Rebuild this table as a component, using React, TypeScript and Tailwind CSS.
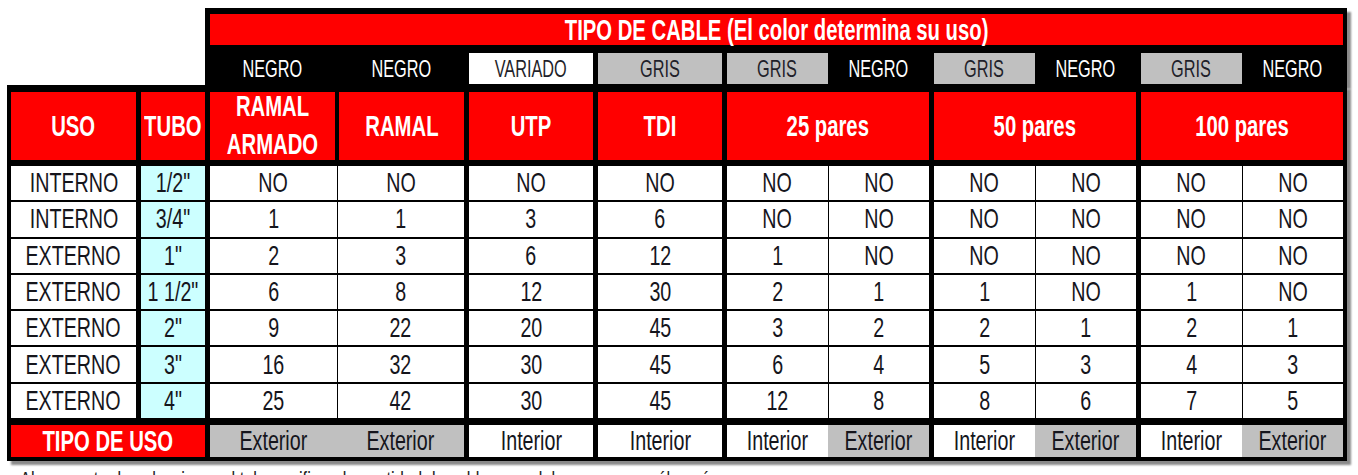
import React from 'react';

const cols = 'grid grid-cols-[125px_64px_254px_124px_124px_202px_202px_202px] gap-x-[5px]';
const topCols = 'grid grid-cols-[254px_124px_124px_202px_202px_202px] gap-x-[5px]';

const rows = [
  ['INTERNO', '1/2"', 'NO', 'NO', 'NO', 'NO', 'NO', 'NO', 'NO', 'NO', 'NO', 'NO'],
  ['INTERNO', '3/4"', '1', '1', '3', '6', 'NO', 'NO', 'NO', 'NO', 'NO', 'NO'],
  ['EXTERNO', '1"', '2', '3', '6', '12', '1', 'NO', 'NO', 'NO', 'NO', 'NO'],
  ['EXTERNO', '1 1/2"', '6', '8', '12', '30', '2', '1', '1', 'NO', '1', 'NO'],
  ['EXTERNO', '2"', '9', '22', '20', '45', '3', '2', '2', '1', '2', '1'],
  ['EXTERNO', '3"', '16', '32', '30', '45', '6', '4', '5', '3', '4', '3'],
  ['EXTERNO', '4"', '25', '42', '30', '45', '12', '8', '8', '6', '7', '5'],
];

const font = { fontFamily: "'Liberation Sans', Arial, sans-serif" };

// narrow look: Liberation Sans squeezed sideways
function N({ children }: { children: React.ReactNode }) {
  return <span className="inline-block whitespace-nowrap scale-x-[0.82] scale-y-[1.14]">{children}</span>;
}

function B({ children, className = '' }: { children: React.ReactNode; className?: string }) {
  return (
    <span className={`inline-block whitespace-nowrap text-center font-bold scale-x-[0.78] scale-y-[1.12] ${className}`}>
      {children}
    </span>
  );
}

function C({ children }: { children: React.ReactNode }) {
  return <span className="inline-block whitespace-nowrap scale-x-[0.74] scale-y-[1.08]">{children}</span>;
}

function Cell({ children, className = '' }: { children?: React.ReactNode; className?: string }) {
  return (
    <div className={`flex items-center justify-center text-[24px] leading-none text-[#15151c] ${className}`}>
      <N>{children}</N>
    </div>
  );
}

function Head({ children }: { children: React.ReactNode }) {
  return (
    <div className="flex items-center justify-center bg-[#ff0000] text-[26px] leading-none text-white">
      <B>{children}</B>
    </div>
  );
}

function Pair({ a, b }: { a: string; b: string }) {
  return (
    <div className="flex gap-[1px]">
      <div className="flex flex-1 items-center justify-center bg-[#c0c0c0] text-[#1f1f2a]">
        <C>{a}</C>
      </div>
      <div className="flex flex-1 items-center justify-center text-white">
        <C>{b}</C>
      </div>
    </div>
  );
}

export default function App() {
  return (
    <div className="h-screen overflow-hidden bg-white pl-[7px] pt-[8px]" style={font}>
      {/* Tipo de cable */}
      <div className="ml-[198px] w-[1142px] bg-black pb-[1px] pl-[5px] pr-[4px] pt-[6px] shadow-[4px_4px_2px_#8a8a8a]">
        <div className="flex h-[31px] items-center justify-center bg-[#ff0000] text-[26px] leading-none text-white">
          <B>TIPO DE CABLE (El color determina su uso)</B>
        </div>
        <div className={`${topCols} mt-[8px] h-[31px] text-[22px] leading-none`}>
          <div className="flex gap-[4px] text-white">
            <div className="flex flex-1 items-center justify-center">
              <C>NEGRO</C>
            </div>
            <div className="flex flex-1 items-center justify-center">
              <C>NEGRO</C>
            </div>
          </div>
          <div className="flex items-center justify-center bg-white text-[#1f1f2a]">
            <C>VARIADO</C>
          </div>
          <div className="flex items-center justify-center bg-[#c0c0c0] text-[#1f1f2a]">
            <C>GRIS</C>
          </div>
          <Pair a="GRIS" b="NEGRO" />
          <Pair a="GRIS" b="NEGRO" />
          <Pair a="GRIS" b="NEGRO" />
        </div>
      </div>

      {/* Main table */}
      <div className="w-[1340px] bg-black pb-[4px] pl-[4px] pr-[4px] pt-[7px] shadow-[4px_4px_2px_#8a8a8a]">
        <div className={`${cols} h-[67px]`}>
          <Head>USO</Head>
          <Head>TUBO</Head>
          <div className="flex gap-[4px]">
            <div className="flex flex-1 items-center justify-center bg-[#ff0000] text-[26px] leading-[34px] text-white">
              <B className="translate-y-[-1px]">
                RAMAL
                <br />
                ARMADO
              </B>
            </div>
            <div className="flex flex-1 items-center justify-center bg-[#ff0000] text-[26px] leading-none text-white">
              <B>RAMAL</B>
            </div>
          </div>
          <Head>UTP</Head>
          <Head>TDI</Head>
          <Head>25 pares</Head>
          <Head>50 pares</Head>
          <Head>100 pares</Head>
        </div>

        <div className="mt-[7px] flex flex-col gap-y-[2px]">
          {rows.map((r, i) => (
            <div key={i} className={`${cols} h-[34.3px]`}>
              <Cell className="bg-white">{r[0]}</Cell>
              <Cell className="bg-[#ccffff]">{r[1]}</Cell>
              <div className="flex gap-[1px]">
                <Cell className="flex-1 bg-white">{r[2]}</Cell>
                <Cell className="flex-1 bg-white">{r[3]}</Cell>
              </div>
              <Cell className="bg-white">{r[4]}</Cell>
              <Cell className="bg-white">{r[5]}</Cell>
              {[6, 8, 10].map((k) => (
                <div key={k} className="flex gap-[1px]">
                  <Cell className="flex-1 bg-white">{r[k]}</Cell>
                  <Cell className="flex-1 bg-white">{r[k + 1]}</Cell>
                </div>
              ))}
            </div>
          ))}
        </div>

        <div className={`${cols} mt-[7px] h-[32px]`}>
          <div className="col-span-2 flex items-center justify-center bg-[#ff0000] text-[26px] leading-none text-white">
            <B>TIPO DE USO</B>
          </div>
          <div className="flex bg-[#c0c0c0]">
            <Cell className="flex-1">Exterior</Cell>
            <Cell className="flex-1">Exterior</Cell>
          </div>
          <Cell className="bg-white">Interior</Cell>
          <Cell className="bg-white">Interior</Cell>
          {[0, 1, 2].map((k) => (
            <div key={k} className="flex">
              <Cell className="flex-1 bg-white">Interior</Cell>
              <Cell className="flex-1 bg-[#c0c0c0]">Exterior</Cell>
            </div>
          ))}
        </div>
      </div>

      <p className="ml-[13px] mt-[8px] text-[20px] leading-none text-[#222]">
        <span className="inline-block origin-left whitespace-nowrap scale-x-[0.82] scale-y-[1.14]">
          Al momento de seleccionar el tubo verifique la cantidad de cables que deben pasar por él según su uso.
        </span>
      </p>
    </div>
  );
}
